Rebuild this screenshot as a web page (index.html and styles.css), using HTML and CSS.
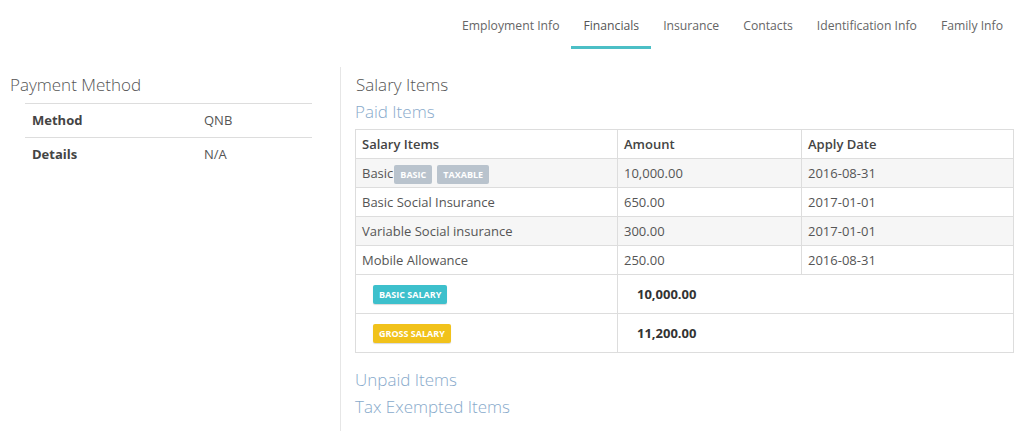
FILE: index.html
```html
<!DOCTYPE html>
<html lang="en">
<head>
    <meta charset="UTF-8">
    <title>Employee Financials</title>
    <link rel="stylesheet" href="styles.css">
</head>
<body>
    <div class="tabs">
        <a href="#">Employment Info</a>
        <a href="#" class="active">Financials</a>
        <a href="#">Insurance</a>
        <a href="#">Contacts</a>
        <a href="#">Identification Info</a>
        <a href="#">Family Info</a>
    </div>
    <div class="main">
        <div class="left">
            <h3 class="title">Payment Method</h3>
            <table class="info">
                <tr><th>Method</th><td>QNB</td></tr>
                <tr><th>Details</th><td>N/A</td></tr>
            </table>
        </div>
        <div class="right">
            <h3 class="title">Salary Items</h3>
            <h4 class="sub">Paid Items</h4>
            <table class="salary">
                <thead>
                    <tr><th class="c1">Salary Items</th><th class="c2">Amount</th><th>Apply Date</th></tr>
                </thead>
                <tbody>
                    <tr class="odd"><td>Basic<span class="tag grey">BASIC</span><span class="tag grey">TAXABLE</span></td><td>10,000.00</td><td>2016-08-31</td></tr>
                    <tr><td>Basic Social Insurance</td><td>650.00</td><td>2017-01-01</td></tr>
                    <tr class="odd"><td>Variable Social insurance</td><td>300.00</td><td>2017-01-01</td></tr>
                    <tr><td>Mobile Allowance</td><td>250.00</td><td>2016-08-31</td></tr>
                    <tr class="total"><td><span class="tag teal">BASIC SALARY</span></td><td colspan="2">10,000.00</td></tr>
                    <tr class="total"><td><span class="tag yellow">GROSS SALARY</span></td><td colspan="2">11,200.00</td></tr>
                </tbody>
            </table>
            <h4 class="sub unpaid">Unpaid Items</h4>
            <h4 class="sub">Tax Exempted Items</h4>
        </div>
    </div>
</body>
</html>
```

FILE: styles.css
```css
body {
    margin: 0;
    font-family: "Open Sans", Arial, sans-serif;
    font-size: 13px;
    color: #555;
    background: #fff;
}
.tabs {
    display: flex;
    justify-content: flex-end;
    padding-right: 9px;
}
.tabs a {
    display: block;
    padding: 17px 12px 11px;
    font-size: 12.2px;
    line-height: 18px;
    color: #666;
    text-decoration: none;
    border-bottom: 3px solid transparent;
}
.tabs a.active {
    color: #555;
    border-bottom-color: #4cbfc6;
}
.main {
    display: flex;
    margin-top: 18px;
}
.left {
    width: 340px;
    padding-top: 6px;
}
.right {
    flex: 1;
    border-left: 1px solid #e6e6e6;
    padding: 6px 10px 12px 14px;
}
.title {
    margin: 0;
    font-size: 17px;
    font-weight: 300;
    line-height: 24px;
    color: #555;
}
.right .title {
    padding-left: 1px;
}
.left .title {
    padding-left: 10px;
    margin-bottom: 6px;
}
.sub {
    margin: 3px 0 0;
    font-size: 17px;
    font-weight: 300;
    line-height: 24px;
    color: #88aacb;
}
.sub.unpaid {
    margin-top: 15px;
}
.info {
    margin-left: 25px;
    width: 287px;
    border-collapse: collapse;
}
.info th, .info td {
    border-top: 1px solid #ddd;
    padding: 8px 7px;
    line-height: 17px;
    text-align: left;
}
.info th {
    font-weight: 700;
    color: #444;
    width: 158px;
}
.salary {
    margin-top: 5px;
    width: 100%;
    border-collapse: collapse;
    border: 1px solid #ddd;
}
.salary th, .salary td {
    border: 1px solid #ddd;
    padding: 5px 5px 5px 6px;
    line-height: 18px;
    text-align: left;
}
.salary th {
    font-weight: 600;
    color: #444;
}
.salary .c1 {
    width: 250px;
}
.salary .c2 {
    width: 172px;
}
.salary tr.odd td {
    background: #f6f6f6;
}
.salary tr.total td {
    padding: 9px 18px 9px 19px;
    line-height: 19px;
    font-weight: 700;
    color: #333;
}
.salary tr.total td:first-child {
    padding-left: 17px;
}
.tag {
    display: inline-block;
    padding: 0 6px;
    height: 19px;
    line-height: 19px;
    border-radius: 2px;
    color: #fff;
    font-size: 9px;
    font-weight: 700;
    vertical-align: middle;
}
.tag.grey {
    margin: -2px 0 -2px 1px;
    background: #b9c3cd;
}
.tag.grey + .tag.grey {
    margin-left: 5px;
}
.tag.teal {
    background: #3dc0cc;
    box-shadow: 0 1px 1px rgba(0, 0, 0, 0.15);
}
.tag.yellow {
    background: #f1c21b;
    box-shadow: 0 1px 1px rgba(0, 0, 0, 0.15);
}
```
